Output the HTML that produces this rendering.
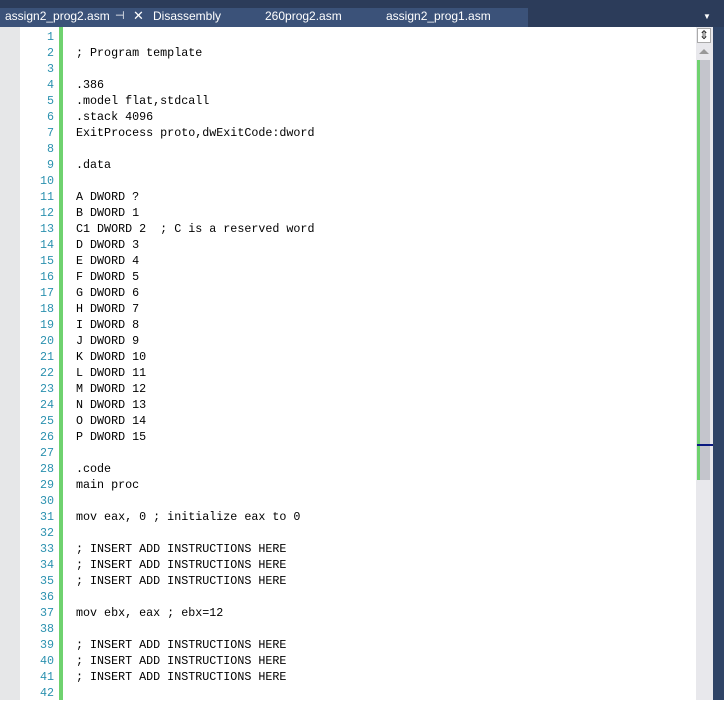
<!DOCTYPE html>
<html><head><style>
body{margin:0;width:724px;height:700px;overflow:hidden;background:#fff;font-family:"Liberation Sans",sans-serif;position:relative}
.top{position:absolute;left:0;top:0;width:724px;height:27px;background:#2c3c5a}
.tabs{position:absolute;left:0;top:8px;width:528px;height:19px;background:#3b5279}
.t{position:absolute;top:9px;color:#fff;font-size:12px;white-space:nowrap}
.gut{position:absolute;left:0;top:27px;width:20px;height:673px;background:#e6e7e8}
.green{position:absolute;left:59px;top:27px;width:4px;height:673px;background:#6fd26f}
.ln{position:absolute;left:20px;top:29px;width:34px;text-align:right;color:#2b91af;font:11.7px/16px "Liberation Mono",monospace;white-space:pre}
.code{position:absolute;left:76px;top:29px;color:#000;font:11.7px/16px "Liberation Mono",monospace;white-space:pre}
.sb{position:absolute;left:696px;top:27px;width:17px;height:673px;background:#e8e8ec}
.rt{position:absolute;left:713px;top:27px;width:11px;height:673px;background:#2f4466}
</style></head><body>
<div class="top"></div><div class="tabs"></div>
<div class="t" style="left:5px">assign2_prog2.asm</div>
<div class="t" style="left:115px;font-size:11px">⊣</div>
<div class="t" style="left:133px;font-size:13px;top:8px">✕</div>
<div class="t" style="left:153px">Disassembly</div>
<div class="t" style="left:265px">260prog2.asm</div>
<div class="t" style="left:386px">assign2_prog1.asm</div>
<div class="t" style="left:703px;font-size:8px;top:12px">▼</div>
<div class="gut"></div><div class="green"></div>
<div class="ln">1
2
3
4
5
6
7
8
9
10
11
12
13
14
15
16
17
18
19
20
21
22
23
24
25
26
27
28
29
30
31
32
33
34
35
36
37
38
39
40
41
42</div>
<div class="code">
; Program template

.386
.model flat,stdcall
.stack 4096
ExitProcess proto,dwExitCode:dword

.data

A DWORD ?
B DWORD 1
C1 DWORD 2  ; C is a reserved word
D DWORD 3
E DWORD 4
F DWORD 5
G DWORD 6
H DWORD 7
I DWORD 8
J DWORD 9
K DWORD 10
L DWORD 11
M DWORD 12
N DWORD 13
O DWORD 14
P DWORD 15

.code
main proc

mov eax, 0 ; initialize eax to 0

; INSERT ADD INSTRUCTIONS HERE
; INSERT ADD INSTRUCTIONS HERE
; INSERT ADD INSTRUCTIONS HERE

mov ebx, eax ; ebx=12

; INSERT ADD INSTRUCTIONS HERE
; INSERT ADD INSTRUCTIONS HERE
; INSERT ADD INSTRUCTIONS HERE
</div>
<div class="sb"></div>
<div style="position:absolute;left:697px;top:28px;width:14px;height:15px;background:#fff;border:1px solid #aaa;box-sizing:border-box;font-size:12px;line-height:13px;text-align:center;color:#222">⇕</div>
<div style="position:absolute;left:699px;top:49px;width:0;height:0;border-left:5px solid transparent;border-right:5px solid transparent;border-bottom:5px solid #999"></div>
<div style="position:absolute;left:700px;top:60px;width:10px;height:420px;background:#c4c5cc"></div>
<div style="position:absolute;left:697px;top:60px;width:3px;height:420px;background:#6fd26f"></div>
<div style="position:absolute;left:697px;top:444px;width:16px;height:2px;background:#0a1a80"></div>
<div class="rt"></div>
</body></html>
